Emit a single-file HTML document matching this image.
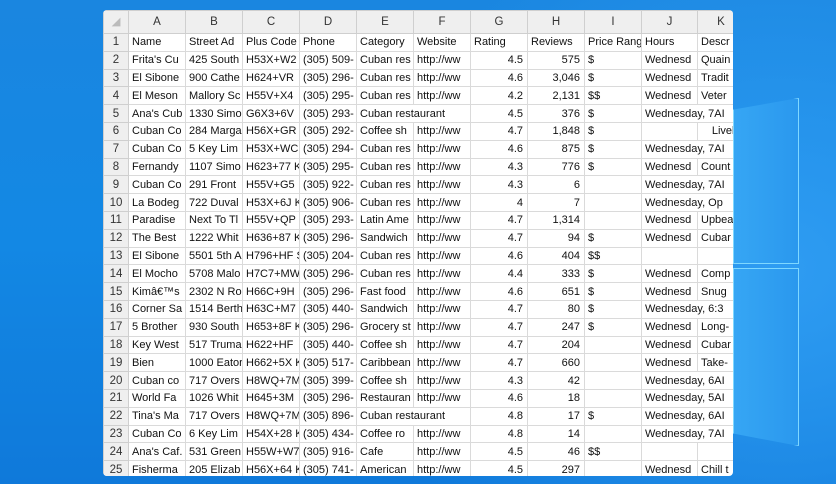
<!DOCTYPE html>
<html><head><meta charset="utf-8"><style>
html,body{margin:0;padding:0}
body{width:836px;height:484px;overflow:hidden;position:relative;
background:radial-gradient(ellipse 420px 380px at 780px 270px,#2f9cf2 0%,rgba(30,130,230,0) 100%),linear-gradient(180deg,#1a86e0 0%,#1388e4 50%,#0f79da 100%);
font-family:"Liberation Sans",Arial,sans-serif}
.pane{position:absolute;background:linear-gradient(90deg,#36a6f4,#2a98ee);border:1px solid #7fd8ff}
#sheet{position:absolute;left:103px;top:10px;width:630px;height:466px;background:#fff;border-radius:4px;overflow:hidden}
table{border-collapse:collapse;table-layout:fixed;position:absolute;left:0;top:0;width:631px}
td{border:1px solid #dadada;padding:0;height:16.8px;font-size:11px;color:#111;white-space:nowrap;overflow:hidden;line-height:16px}
td>div{overflow:hidden;padding:0 1px 0 3px}
tr.h td{height:22px;background:#efefef;text-align:center;color:#333;font-size:11.5px;border-color:#cfcfcf}
td.n{background:#efefef;text-align:center;color:#333;border-color:#cfcfcf;font-size:11.5px}
td.r{text-align:right}
td.r>div{padding-right:4px}
</style></head><body>
<div class="pane" style="left:733px;top:98px;width:64px;height:164px;clip-path:polygon(0 7%,100% 0,100% 100%,0 100%)"></div>
<div class="pane" style="left:733px;top:268px;width:64px;height:176px;clip-path:polygon(0 0,100% 0,100% 100%,0 93%)"></div>
<div id="sheet"><table>
<colgroup><col style="width:25px"><col style="width:57px"><col style="width:57px"><col style="width:57px"><col style="width:57px"><col style="width:57px"><col style="width:57px"><col style="width:57px"><col style="width:57px"><col style="width:57px"><col style="width:56px"><col style="width:47px"></colgroup>
<tr class="h"><td style="color:#bbb">◢</td><td>A</td><td>B</td><td>C</td><td>D</td><td>E</td><td>F</td><td>G</td><td>H</td><td>I</td><td>J</td><td>K</td></tr>
<tr><td class="n">1</td><td><div>Name</div></td><td><div>Street Ad</div></td><td><div>Plus Code</div></td><td><div>Phone</div></td><td><div>Category</div></td><td><div>Website</div></td><td><div>Rating</div></td><td><div>Reviews</div></td><td><div>Price Rang</div></td><td><div>Hours</div></td><td><div>Descr</div></td></tr>
<tr><td class="n">2</td><td><div>Frita's Cu</div></td><td><div>425 South</div></td><td><div>H53X+W2</div></td><td><div>(305) 509-</div></td><td><div>Cuban res</div></td><td><div>http://ww</div></td><td class="r"><div>4.5</div></td><td class="r"><div>575</div></td><td><div>$</div></td><td><div>Wednesd</div></td><td><div>Quain</div></td></tr>
<tr><td class="n">3</td><td><div>El Sibone</div></td><td><div>900 Cathe</div></td><td><div>H624+VR</div></td><td><div>(305) 296-</div></td><td><div>Cuban res</div></td><td><div>http://ww</div></td><td class="r"><div>4.6</div></td><td class="r"><div>3,046</div></td><td><div>$</div></td><td><div>Wednesd</div></td><td><div>Tradit</div></td></tr>
<tr><td class="n">4</td><td><div>El Meson</div></td><td><div>Mallory Sc</div></td><td><div>H55V+X4</div></td><td><div>(305) 295-</div></td><td><div>Cuban res</div></td><td><div>http://ww</div></td><td class="r"><div>4.2</div></td><td class="r"><div>2,131</div></td><td><div>$$</div></td><td><div>Wednesd</div></td><td><div>Veter</div></td></tr>
<tr><td class="n">5</td><td><div>Ana's Cub</div></td><td><div>1330 Simo</div></td><td><div>G6X3+6V</div></td><td><div>(305) 293-</div></td><td colspan="2"><div>Cuban restaurant</div></td><td class="r"><div>4.5</div></td><td class="r"><div>376</div></td><td><div>$</div></td><td colspan="2"><div>Wednesday, 7AI</div></td></tr>
<tr><td class="n">6</td><td><div>Cuban Co</div></td><td><div>284 Marga</div></td><td><div>H56X+GR</div></td><td><div>(305) 292-</div></td><td><div>Coffee sh</div></td><td><div>http://ww</div></td><td class="r"><div>4.7</div></td><td class="r"><div>1,848</div></td><td><div>$</div></td><td></td><td class="r"><div>Lively</div></td></tr>
<tr><td class="n">7</td><td><div>Cuban Co</div></td><td><div>5 Key Lim</div></td><td><div>H53X+WC</div></td><td><div>(305) 294-</div></td><td><div>Cuban res</div></td><td><div>http://ww</div></td><td class="r"><div>4.6</div></td><td class="r"><div>875</div></td><td><div>$</div></td><td colspan="2"><div>Wednesday, 7AI</div></td></tr>
<tr><td class="n">8</td><td><div>Fernandy</div></td><td><div>1107 Simo</div></td><td><div>H623+77 K</div></td><td><div>(305) 295-</div></td><td><div>Cuban res</div></td><td><div>http://ww</div></td><td class="r"><div>4.3</div></td><td class="r"><div>776</div></td><td><div>$</div></td><td><div>Wednesd</div></td><td><div>Count</div></td></tr>
<tr><td class="n">9</td><td><div>Cuban Co</div></td><td><div>291 Front</div></td><td><div>H55V+G5</div></td><td><div>(305) 922-</div></td><td><div>Cuban res</div></td><td><div>http://ww</div></td><td class="r"><div>4.3</div></td><td class="r"><div>6</div></td><td></td><td colspan="2"><div>Wednesday, 7AI</div></td></tr>
<tr><td class="n">10</td><td><div>La Bodeg</div></td><td><div>722 Duval</div></td><td><div>H53X+6J K</div></td><td><div>(305) 906-</div></td><td><div>Cuban res</div></td><td><div>http://ww</div></td><td class="r"><div>4</div></td><td class="r"><div>7</div></td><td></td><td colspan="2"><div>Wednesday, Op</div></td></tr>
<tr><td class="n">11</td><td><div>Paradise</div></td><td><div>Next To Tl</div></td><td><div>H55V+QP</div></td><td><div>(305) 293-</div></td><td><div>Latin Ame</div></td><td><div>http://ww</div></td><td class="r"><div>4.7</div></td><td class="r"><div>1,314</div></td><td></td><td><div>Wednesd</div></td><td><div>Upbea</div></td></tr>
<tr><td class="n">12</td><td><div>The Best</div></td><td><div>1222 Whit</div></td><td><div>H636+87 K</div></td><td><div>(305) 296-</div></td><td><div>Sandwich</div></td><td><div>http://ww</div></td><td class="r"><div>4.7</div></td><td class="r"><div>94</div></td><td><div>$</div></td><td><div>Wednesd</div></td><td><div>Cubar</div></td></tr>
<tr><td class="n">13</td><td><div>El Sibone</div></td><td><div>5501 5th A</div></td><td><div>H796+HF S</div></td><td><div>(305) 204-</div></td><td><div>Cuban res</div></td><td><div>http://ww</div></td><td class="r"><div>4.6</div></td><td class="r"><div>404</div></td><td><div>$$</div></td><td></td><td></td></tr>
<tr><td class="n">14</td><td><div>El Mocho</div></td><td><div>5708 Malo</div></td><td><div>H7C7+MW</div></td><td><div>(305) 296-</div></td><td><div>Cuban res</div></td><td><div>http://ww</div></td><td class="r"><div>4.4</div></td><td class="r"><div>333</div></td><td><div>$</div></td><td><div>Wednesd</div></td><td><div>Comp</div></td></tr>
<tr><td class="n">15</td><td><div>Kimâ€™s</div></td><td><div>2302 N Ro</div></td><td><div>H66C+9H</div></td><td><div>(305) 296-</div></td><td><div>Fast food</div></td><td><div>http://ww</div></td><td class="r"><div>4.6</div></td><td class="r"><div>651</div></td><td><div>$</div></td><td><div>Wednesd</div></td><td><div>Snug</div></td></tr>
<tr><td class="n">16</td><td><div>Corner Sa</div></td><td><div>1514 Berth</div></td><td><div>H63C+M7</div></td><td><div>(305) 440-</div></td><td><div>Sandwich</div></td><td><div>http://ww</div></td><td class="r"><div>4.7</div></td><td class="r"><div>80</div></td><td><div>$</div></td><td colspan="2"><div>Wednesday, 6:3</div></td></tr>
<tr><td class="n">17</td><td><div>5 Brother</div></td><td><div>930 South</div></td><td><div>H653+8F K</div></td><td><div>(305) 296-</div></td><td><div>Grocery st</div></td><td><div>http://ww</div></td><td class="r"><div>4.7</div></td><td class="r"><div>247</div></td><td><div>$</div></td><td><div>Wednesd</div></td><td><div>Long-</div></td></tr>
<tr><td class="n">18</td><td><div>Key West</div></td><td><div>517 Truma</div></td><td><div>H622+HF</div></td><td><div>(305) 440-</div></td><td><div>Coffee sh</div></td><td><div>http://ww</div></td><td class="r"><div>4.7</div></td><td class="r"><div>204</div></td><td></td><td><div>Wednesd</div></td><td><div>Cubar</div></td></tr>
<tr><td class="n">19</td><td><div>Bien</div></td><td><div>1000 Eator</div></td><td><div>H662+5X K</div></td><td><div>(305) 517-</div></td><td><div>Caribbean</div></td><td><div>http://ww</div></td><td class="r"><div>4.7</div></td><td class="r"><div>660</div></td><td></td><td><div>Wednesd</div></td><td><div>Take-</div></td></tr>
<tr><td class="n">20</td><td><div>Cuban co</div></td><td><div>717 Overs</div></td><td><div>H8WQ+7M</div></td><td><div>(305) 399-</div></td><td><div>Coffee sh</div></td><td><div>http://ww</div></td><td class="r"><div>4.3</div></td><td class="r"><div>42</div></td><td></td><td colspan="2"><div>Wednesday, 6AI</div></td></tr>
<tr><td class="n">21</td><td><div>World Fa</div></td><td><div>1026 Whit</div></td><td><div>H645+3M</div></td><td><div>(305) 296-</div></td><td><div>Restauran</div></td><td><div>http://ww</div></td><td class="r"><div>4.6</div></td><td class="r"><div>18</div></td><td></td><td colspan="2"><div>Wednesday, 5AI</div></td></tr>
<tr><td class="n">22</td><td><div>Tina's Ma</div></td><td><div>717 Overs</div></td><td><div>H8WQ+7M</div></td><td><div>(305) 896-</div></td><td colspan="2"><div>Cuban restaurant</div></td><td class="r"><div>4.8</div></td><td class="r"><div>17</div></td><td><div>$</div></td><td colspan="2"><div>Wednesday, 6AI</div></td></tr>
<tr><td class="n">23</td><td><div>Cuban Co</div></td><td><div>6 Key Lim</div></td><td><div>H54X+28 K</div></td><td><div>(305) 434-</div></td><td><div>Coffee ro</div></td><td><div>http://ww</div></td><td class="r"><div>4.8</div></td><td class="r"><div>14</div></td><td></td><td colspan="2"><div>Wednesday, 7AI</div></td></tr>
<tr><td class="n">24</td><td><div>Ana's Caf.</div></td><td><div>531 Green</div></td><td><div>H55W+W7</div></td><td><div>(305) 916-</div></td><td><div>Cafe</div></td><td><div>http://ww</div></td><td class="r"><div>4.5</div></td><td class="r"><div>46</div></td><td><div>$$</div></td><td></td><td></td></tr>
<tr><td class="n">25</td><td><div>Fisherma</div></td><td><div>205 Elizab</div></td><td><div>H56X+64 K</div></td><td><div>(305) 741-</div></td><td><div>American</div></td><td><div>http://ww</div></td><td class="r"><div>4.5</div></td><td class="r"><div>297</div></td><td></td><td><div>Wednesd</div></td><td><div>Chill t</div></td></tr>
</table></div>
</body></html>
